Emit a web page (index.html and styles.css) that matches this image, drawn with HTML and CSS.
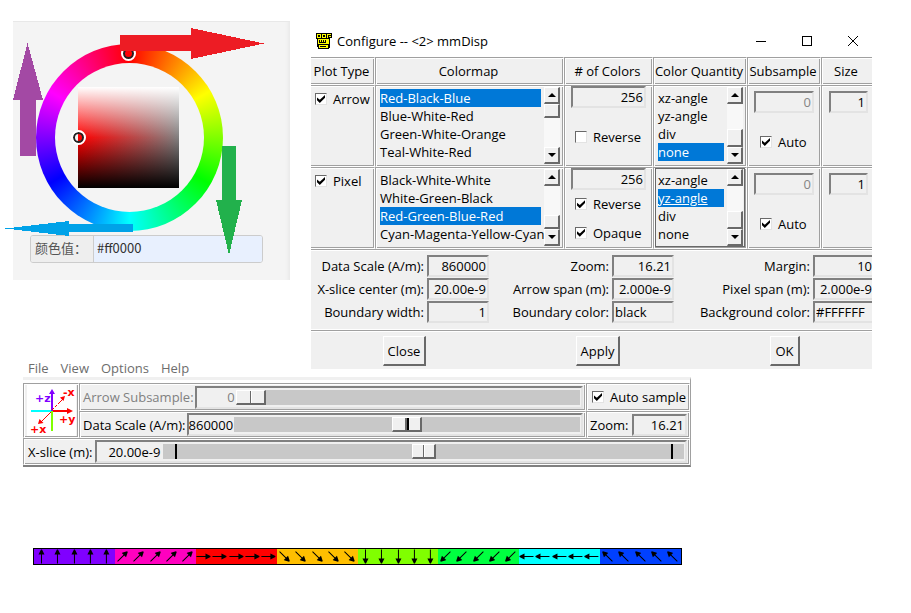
FILE: index.html
```html
<!DOCTYPE html>
<html lang="en">
<head>
<meta charset="utf-8">
<title>mmDisp</title>
<link rel="stylesheet" href="styles.css">
</head>
<body>
<div class="top">
  <div class="side">
    <section class="picker">
      <div class="ring">
        <div class="hole"><div class="shade"></div></div>
        <span class="marker hue"></span>
        <span class="marker tone"></span>
      </div>
      <div class="hex">
        <label for="hex">颜色值：</label>
        <input id="hex" type="text" value="#ff0000">
      </div>
      <svg class="arrows" width="290" height="259" viewBox="0 21 290 259" shape-rendering="crispEdges" aria-hidden="true">
        <path fill="#ed1c24" d="M120 35H191V28L264 43.500L191 59V51H120Z"/>
        <path fill="#a349a4" d="M20 156V100H13L27.500 43L43 100H36V156Z"/>
        <path fill="#22b14c" d="M222 146H236V200H242L229 255L216 200H222Z"/>
        <path fill="#00a2e8" d="M133 224H69V221L5 228.500L69 236V232H133Z"/>
      </svg>
    </section>
    <nav class="menu">
      <button type="button">File</button>
      <button type="button">View</button>
      <button type="button">Options</button>
      <button type="button">Help</button>
    </nav>
  </div>

  <section class="window">
    <header class="titlebar">
      <svg width="16" height="16" viewBox="0 0 16 16" shape-rendering="crispEdges" aria-hidden="true">
        <path fill="#000" d="M0 0H16V5H14V15H13V16H2V14H1V6H0Z"/>
        <path fill="#ff0" d="M1 1H5V5H1ZM6 1H10V5H6ZM11 1H15V2H12V5H11ZM2 6H13V11H2ZM3 12H12V15H3ZM13 3H15V4H13Z"/>
        <path fill="#000" d="M2 2H4V4H2ZM7 2H9V4H7ZM3 7H4V9H3ZM5 7H6V9H5ZM7 7H8V9H7ZM9 7H10V9H9ZM3 9H10V10H3ZM4 13H10V14H4Z"/>
      </svg>
      <h1>Configure -- &lt;2&gt; mmDisp</h1>
      <div class="controls">
        <button type="button" aria-label="Minimize"><svg width="12" height="12" viewBox="0 0 12 12" shape-rendering="crispEdges"><path d="M1 6.500H11"/></svg></button>
        <button type="button" aria-label="Maximize"><svg width="12" height="12" viewBox="0 0 12 12" shape-rendering="crispEdges"><path d="M1.500 1.500H10.500V10.500H1.500Z"/></svg></button>
        <button type="button" aria-label="Close window"><svg width="12" height="12" viewBox="0 0 12 12"><path d="M1 1L11 11M11 1L1 11"/></svg></button>
      </div>
    </header>

    <table class="config">
      <colgroup><col class="c-type"><col class="c-map"><col class="c-count"><col class="c-quantity"><col class="c-sub"><col></colgroup>
      <thead>
        <tr><th>Plot Type</th><th>Colormap</th><th># of Colors</th><th>Color Quantity</th><th>Subsample</th><th>Size</th></tr>
      </thead>
      <tbody>
        <tr>
          <td><label class="check type"><input type="checkbox" checked>Arrow</label></td>
          <td>
            <div class="list">
              <select size="4" aria-label="Arrow colormap"><option selected>Red-Black-Blue</option><option>Blue-White-Red</option><option>Green-White-Orange</option><option>Teal-White-Red</option></select>
              <div class="scroll"><i class="up"></i><i class="thumb"></i><i class="gap"></i><i class="down"></i></div>
            </div>
          </td>
          <td>
            <div class="stack">
              <input class="field" type="text" value="256" aria-label="Arrow colors">
              <label class="check"><input type="checkbox">Reverse</label>
            </div>
          </td>
          <td>
            <div class="list">
              <select size="4" aria-label="Arrow color quantity"><option>xz-angle</option><option>yz-angle</option><option>div</option><option selected>none</option></select>
              <div class="scroll"><i class="up"></i><i class="gap"></i><i class="thumb tall"></i><i class="down"></i></div>
            </div>
          </td>
          <td>
            <div class="stack low">
              <input class="field" type="text" value="0" disabled aria-label="Arrow subsample">
              <label class="check"><input type="checkbox" checked>Auto</label>
            </div>
          </td>
          <td><div class="stack size"><input class="field" type="text" value="1" aria-label="Arrow size"></div></td>
        </tr>
        <tr>
          <td><label class="check type"><input type="checkbox" checked>Pixel</label></td>
          <td>
            <div class="list">
              <select size="4" aria-label="Pixel colormap"><option>Black-White-White</option><option>White-Green-Black</option><option selected>Red-Green-Blue-Red</option><option>Cyan-Magenta-Yellow-Cyan</option></select>
              <div class="scroll"><i class="up"></i><i class="gap"></i><i class="thumb"></i><i class="down"></i></div>
            </div>
          </td>
          <td>
            <div class="stack">
              <input class="field" type="text" value="256" aria-label="Pixel colors">
              <label class="check"><input type="checkbox" checked>Reverse</label>
              <label class="check"><input type="checkbox" checked>Opaque</label>
            </div>
          </td>
          <td>
            <div class="list active">
              <select size="4" aria-label="Pixel color quantity"><option>xz-angle</option><option selected class="current">yz-angle</option><option>div</option><option>none</option></select>
              <div class="scroll"><i class="up"></i><i class="gap"></i><i class="thumb tall"></i><i class="down"></i></div>
            </div>
          </td>
          <td>
            <div class="stack low">
              <input class="field" type="text" value="0" disabled aria-label="Pixel subsample">
              <label class="check"><input type="checkbox" checked>Auto</label>
            </div>
          </td>
          <td><div class="stack size"><input class="field" type="text" value="1" aria-label="Pixel size"></div></td>
        </tr>
      </tbody>
    </table>

    <div class="params">
      <label for="p1">Data Scale (A/m):</label><input class="field" id="p1" type="text" value="860000">
      <label for="p2">Zoom:</label><input class="field" id="p2" type="text" value="16.21">
      <label for="p3">Margin:</label><input class="field cut" id="p3" type="text" value="10">
      <label for="p4">X-slice center (m):</label><input class="field" id="p4" type="text" value="20.00e-9">
      <label for="p5">Arrow span (m):</label><input class="field" id="p5" type="text" value="2.000e-9">
      <label for="p6">Pixel span (m):</label><input class="field cut" id="p6" type="text" value="2.000e-9">
      <label for="p7">Boundary width:</label><input class="field" id="p7" type="text" value="1">
      <label for="p8">Boundary color:</label><input class="field text" id="p8" type="text" value="black">
      <label for="p9">Background color:</label><input class="field text cut" id="p9" type="text" value="#FFFFFF">
    </div>

    <footer class="actions">
      <button type="button">Close</button>
      <button type="button">Apply</button>
      <button type="button">OK</button>
    </footer>
  </section>
</div>

<section class="toolbar">
  <div class="cell axes">
    <svg width="49" height="51" viewBox="0 0 49 51" role="img" aria-label="Axes">
      <rect width="49" height="51" fill="#fff"/>
      <g fill="none" shape-rendering="crispEdges">
        <path stroke="#0ff" stroke-width="2" d="M4 26H25"/>
        <path stroke="#80ff00" stroke-width="2" d="M25 26V46"/>
        <path stroke="#8000ff" stroke-width="2" d="M25 26V8"/>
        <path stroke="#f00" stroke-width="2" d="M26 26H41"/>
        <path stroke="#f00" d="M24 27L13 38"/>
        <path stroke="#f00" stroke-dasharray="3 1" d="M25 25L36 14"/>
      </g>
      <path fill="#8000ff" d="M25 4L28 9H22Z"/>
      <path fill="#f00" d="M46 26L40 23V29ZM11 39L12.500 34L16.500 38ZM38 11L36.500 16L33 12.500Z"/>
      <g font-size="11" font-weight="bold" fill="#f00">
        <text x="8" y="17" fill="#8000ff">+z</text><text x="36" y="11">-x</text><text x="32" y="38">+y</text><text x="3" y="48">+x</text>
      </g>
    </svg>
  </div>
  <div class="cell"><label for="s1" class="off">Arrow Subsample:</label>
    <div class="slider"><output class="off">0</output><input id="s1" type="range" value="0"></div></div>
  <div class="cell"><label class="check"><input type="checkbox" checked>Auto sample</label></div>
  <div class="cell"><label for="s2">Data Scale (A/m):</label>
    <div class="slider"><output>860000</output><input id="s2" class="strong" type="range" value="50"></div></div>
  <div class="cell"><label for="zoom">Zoom:</label><input class="field" id="zoom" type="text" value="16.21"></div>
  <div class="cell wide"><label for="s3">X-slice (m):</label>
    <div class="slider"><output>20.00e-9</output><input id="s3" class="ends" type="range" value="50"></div></div>
</section>

<svg width="0" height="0" class="defs" aria-hidden="true">
  <defs>
    <path id="needle" class="needle" d="M-7 -0.500H2V-3L3 -2.500L7 -0.500V0.500L3 2.500L2 3V0.500H-7Z"/>
    <g id="row">
      <g transform="translate(7.500 7.500)"><use href="#needle"/></g>
      <g transform="translate(23.500 7.500)"><use href="#needle"/></g>
      <g transform="translate(40.500 7.500)"><use href="#needle"/></g>
      <g transform="translate(56.500 7.500)"><use href="#needle"/></g>
      <g transform="translate(72.500 7.500)"><use href="#needle"/></g>
    </g>
  </defs>
</svg>
<section class="spectrum">
  <div class="violet"><svg viewBox="0 0 81 15"><use href="#row"/></svg></div>
  <div class="pink"><svg viewBox="0 0 81 15"><use href="#row"/></svg></div>
  <div class="red"><svg viewBox="0 0 81 15"><use href="#row"/></svg></div>
  <div class="amber"><svg viewBox="0 0 81 15"><use href="#row"/></svg></div>
  <div class="lime"><svg viewBox="0 0 81 15"><use href="#row"/></svg></div>
  <div class="green"><svg viewBox="0 0 81 15"><use href="#row"/></svg></div>
  <div class="cyan"><svg viewBox="0 0 81 15"><use href="#row"/></svg></div>
  <div class="blue"><svg viewBox="0 0 81 15"><use href="#row"/></svg></div>
</section>
</body>
</html>
```
FILE: styles.css
```css
* { box-sizing: border-box; }

body {
  margin: 0;
  background: #fff;
  color: #000;
  font: 13px/18px "Open Sans", "Noto Sans CJK SC", sans-serif;
}

button, input, select, option { font: inherit; color: inherit; }
button { margin: 0; padding: 0; border: 0; background: none; }
svg { display: block; }

.top { display: flex; padding-right: 39px; }

/* colour picker */
.side {
  flex: none;
  width: 311px;
  display: flex;
  flex-direction: column;
  justify-content: space-between;
  padding-top: 21px;
}
.picker {
  position: relative;
  width: 277px;
  margin-left: 13px;
  padding: 23px 27px 17px 17px;
  background: #f4f4f4;
  box-shadow: inset 0 1px #e8e8e8, inset -5px 0 4px -4px #e4e4e4;
}
.ring {
  position: relative;
  width: 187px;
  height: 187px;
  margin: 0 0 4px 6px;
  padding: 19px;
  border-radius: 50%;
  background: conic-gradient(#f00, #ff0, #0f0, #0ff, #00f, #f0f, #f00);
}
.hole {
  height: 149px;
  padding: 24px 23px;
  border-radius: 50%;
  background: #f4f4f4;
}
.shade {
  width: 101px;
  height: 101px;
  background:
    linear-gradient(#fff, rgba(255, 255, 255, 0) 50%, rgba(0, 0, 0, 0) 50%, #000),
    linear-gradient(to right, #f00, #808080);
}
.marker {
  position: absolute;
  width: 15px;
  height: 15px;
  border: 2px solid #fff;
  border-radius: 50%;
  box-shadow: inset 0 0 0 2px #222;
}
.hue { left: 85px; top: 2px; }
.tone { left: 35px; top: 86px; }
.hex {
  display: flex;
  height: 28px;
  border: 1px solid #ccc;
  border-radius: 3px;
  font: 13px/24px "Noto Sans CJK SC", sans-serif;
  color: #333;
  overflow: hidden;
}
.hex label { flex: none; width: 63px; padding-left: 4px; background: #eee; color: #555; border-right: 1px solid #ccc; }
.hex input { flex: 1; min-width: 0; padding: 0 4px 2px 3px; border: 0; background: #e8f0fe; }
.arrows { position: absolute; left: -13px; top: 0; }

.menu { display: flex; gap: 12px; padding-left: 28px; color: #6d6d6d; }

/* configuration window */
.window { flex: 1; min-width: 0; margin-top: 25px; margin-bottom: 8px; background: #f0f0f0; }
.titlebar { display: flex; align-items: center; gap: 5px; height: 32px; padding: 0 13px 0 5px; background: #fff; }
.titlebar h1 { flex: 1; margin: 0; font: inherit; }
.controls { display: flex; gap: 34px; }
.controls path { fill: none; stroke: #000; }

.config { width: 100%; table-layout: fixed; border-collapse: separate; border-spacing: 0; }
.c-type { width: 64px; }
.c-map { width: 189px; }
.c-count { width: 89px; }
.c-quantity { width: 94px; }
.c-sub { width: 74px; }
.config th, .config td, .cell {
  border: 1px solid #a0a0a0;
  border-right-color: #fff;
  border-bottom-color: #fff;
  box-shadow: inset 1px 1px #fff, inset -1px -1px #a0a0a0;
}
.config th { height: 28px; padding: 0 2px 0 0; font-weight: normal; white-space: nowrap; }
.config td { height: 82px; padding: 0 1px 1px; vertical-align: top; }
.config tr > :first-child { border-left: 0; box-shadow: inset 0 1px #fff, inset -1px -1px #a0a0a0; }
.config tr > :last-child { border-right: 0; box-shadow: inset 1px 1px #fff, inset 0 -1px #a0a0a0; }

.check { display: flex; align-items: center; gap: 6px; white-space: nowrap; }
.type { padding: 4px 3px; }
.check input {
  appearance: none;
  flex: none;
  width: 12px;
  height: 12px;
  margin: 0;
  background: #fff;
  border: 1px solid #696969;
  border-right-color: #e3e3e3;
  border-bottom-color: #e3e3e3;
}
.check input:checked::before {
  content: "";
  display: block;
  width: 8px;
  height: 8px;
  margin: 1px;
  background: #000;
  clip-path: polygon(0 30%, 35% 60%, 100% 0, 100% 35%, 35% 100%, 0 65%);
}

.list { display: flex; height: 79px; padding: 1px 2px 1px 0; }
.list select {
  flex: 1;
  min-width: 0;
  height: 77px;
  margin: 0;
  padding: 2px 3px 1px;
  border: 0;
  outline: 0;
  background: none;
  overflow: hidden;
}
.list option { height: 18px; min-height: 18px; padding: 0; line-height: 18px; overflow: visible; }
.list option:checked { background: linear-gradient(#0078d7, #0078d7); color: #fff; }
.list .current { text-decoration: underline; }
.active { box-shadow: inset 0 0 0 1px #696969; }
.scroll {
  flex: none;
  display: flex;
  flex-direction: column;
  width: 16px;
  background: #f8f8f8;
}
.scroll i {
  flex: none;
  display: block;
  height: 17px;
  background: #f0f0f0;
  border: 1px solid #fff;
  border-right: 2px solid #696969;
  border-bottom: 2px solid #696969;
}
.scroll .thumb { height: 14px; }
.scroll .tall { height: 18px; }
.scroll .gap { flex: 1; border: 0; background: none; }
.up::before, .down::before {
  content: "";
  display: block;
  width: 8px;
  height: 4px;
  margin: 5px 3px;
  background: #000;
  clip-path: polygon(50% 0, 100% 100%, 0 100%);
}
.down::before { clip-path: polygon(0 0, 100% 0, 50% 100%); }

.field {
  min-width: 0;
  width: 100%;
  height: 22px;
  padding: 0 1px;
  border: 2px solid #e3e3e3;
  border-top-color: #808080;
  border-left-color: #808080;
  border-radius: 0;
  outline: 0;
  background: #f0f0f0;
  text-align: right;
}
.field:disabled { color: #858585; }
.stack { display: flex; flex-direction: column; height: 79px; padding: 0 5px; }
.stack .check { flex: 1; padding-left: 4px; }
.low { padding-top: 5px; }
.low .check { margin-top: 6px; padding-left: 6px; }
.size { padding: 5px 3px 0 6px; }

.params {
  display: grid;
  grid-template-columns: 116px 62px 123px 62px 139px 1fr;
  row-gap: 1px;
  padding: 5px 0 6px;
  border-top: 1px solid #a0a0a0;
  border-bottom: 1px solid #fff;
  box-shadow: inset 0 1px #fff;
  line-height: 22px;
}
.params label { padding-right: 3px; text-align: right; white-space: nowrap; }
.params .text { text-align: left; }
.params .cut { border-right: 0; padding-right: 0; }

.actions {
  display: grid;
  grid-template-columns: 187px 200px 1fr;
  justify-items: center;
  padding: 5px 0 3px;
  border-top: 1px solid #a0a0a0;
  box-shadow: inset 0 1px #fff;
}
.actions button {
  height: 30px;
  padding: 0 4px;
  border: 1px solid #fff;
  border-right: 2px solid #696969;
  border-bottom: 2px solid #696969;
}

/* toolbar */
.toolbar {
  display: grid;
  grid-template-columns: 56px 1fr 104px;
  grid-template-rows: 28px 27px 27px;
  max-width: 668px;
  margin-left: 23px;
  padding-top: 3px;
  border-top: 3px solid #f0f0f0;
  border-right: 1px solid #a0a0a0;
  border-bottom: 2px solid #808080;
  background: linear-gradient(#fff 3px, #f0f0f0 3px);
}
.cell { display: flex; align-items: center; padding: 0 2px 0 3px; min-width: 0; white-space: nowrap; }
.cell > .check { padding-left: 2px; }
.axes { grid-row: span 2; padding-left: 3px; font-family: "DejaVu Sans", sans-serif; }
.wide { grid-column: 1 / -1; padding-left: 4px; }
.cell .field { flex: 1; margin-left: 3px; }
.off { color: #808080; }
.slider {
  flex: 1;
  display: flex;
  align-items: center;
  min-width: 0;
  height: 23px;
  margin-left: 1px;
  padding-right: 1px;
  border: 2px solid #e3e3e3;
  border-top-color: #808080;
  border-left-color: #808080;
}
.slider output { flex: none; min-width: 39px; padding-right: 1px; text-align: right; }
.wide .slider { margin-left: 3px; }
.wide output { min-width: 66px; padding-right: 3px; }
.slider input {
  appearance: none;
  flex: 1;
  min-width: 0;
  height: 15px;
  margin: 0;
  background: #c8c8c8;
}
.slider input::-webkit-slider-thumb {
  appearance: none;
  width: 30px;
  height: 15px;
  border: 1px solid #fff;
  border-right: 2px solid #696969;
  border-bottom: 2px solid #696969;
  background: linear-gradient(to right, #f0f0f0 13px, #696969 13px 14px, #fff 14px 15px, #f0f0f0 15px);
}
.slider .strong::-webkit-slider-thumb {
  background: linear-gradient(to right, #f0f0f0 12px, #696969 12px 14px, #000 14px 16px, #f0f0f0 16px);
}
.slider .ends {
  background: linear-gradient(#000, #000) 12px 0 / 2px 15px no-repeat, linear-gradient(#000, #000) calc(100% - 11px) 0 / 2px 15px no-repeat, #c8c8c8;
}
.slider .ends::-webkit-slider-thumb {
  width: 24px;
  background: linear-gradient(to right, #f0f0f0 10px, #696969 10px 11px, #fff 11px 12px, #f0f0f0 12px);
}

/* direction spectrum */
.defs { position: absolute; }
.spectrum {
  display: grid;
  grid-template-columns: repeat(8, 1fr);
  max-width: 649px;
  margin: 81px 0 0 33px;
  border: 1px solid #000;
}
.spectrum svg { width: 100%; height: 15px; }
.needle { transform: rotate(var(--turn)); }
.violet { background: #8000ff; --turn: -90deg; }
.pink { background: #ff00bf; --turn: -45deg; }
.red { background: #f00; --turn: 0deg; }
.amber { background: #ffbf00; --turn: 45deg; }
.lime { background: #80ff00; --turn: 90deg; }
.green { background: #00ff40; --turn: 135deg; }
.cyan { background: #0ff; --turn: 180deg; }
.blue { background: #0040ff; --turn: -135deg; }
```
